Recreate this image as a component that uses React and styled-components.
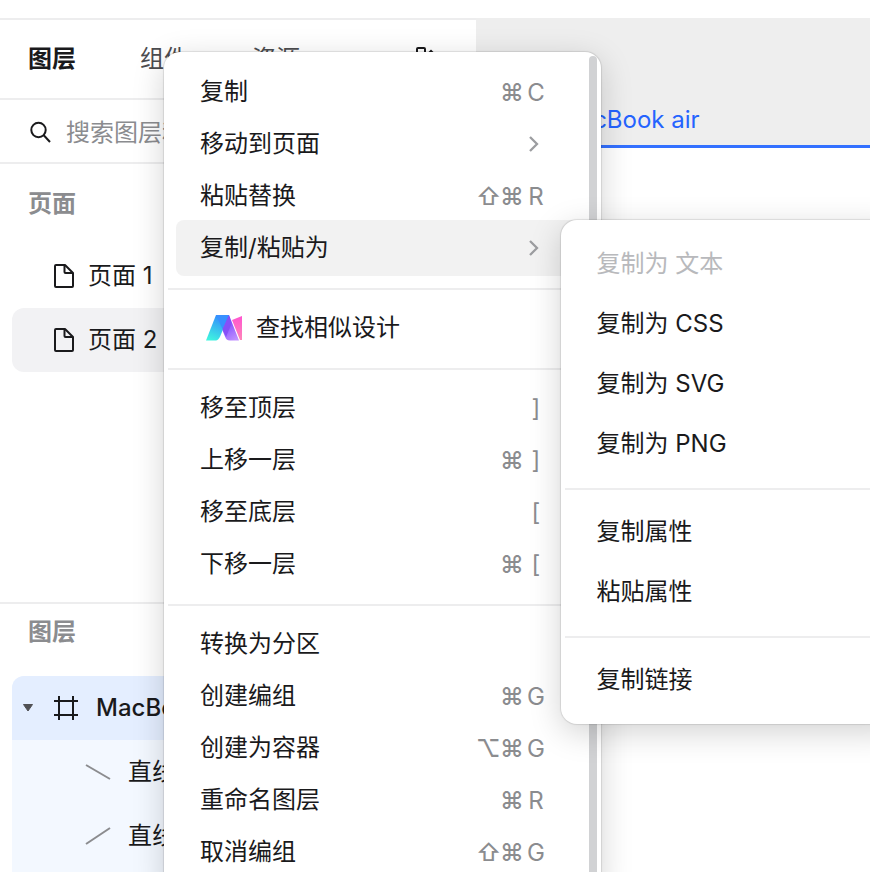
import styled, { createGlobalStyle, css } from "styled-components";

const GlobalStyle = createGlobalStyle`
  * {
    box-sizing: border-box;
  }

  body {
    margin: 0;
    overflow: hidden;
    background: #fff;
    color: #1a1a1c;
    font-family: Inter, "Noto Sans CJK SC", sans-serif;
    font-size: 24px;
    line-height: 32px;
  }
`;

const Screen = styled.div`
  position: relative;
  display: flex;
  width: 870px;
  height: 872px;
  padding-top: 18px;
  overflow: hidden;
  white-space: nowrap;
`;

const Sidebar = styled.aside`
  display: flex;
  flex-direction: column;
  flex: 0 0 476px;
  border-top: 2px solid #ededee;
`;

const TabBar = styled.nav`
  display: flex;
  align-items: center;
  height: 80px;
  padding: 0 40px 0 28px;
  border-bottom: 2px solid #ededee;
`;

const Tab = styled.span`
  width: 112px;
  color: ${({ $active }) => ($active ? "#1a1a1c" : "#4c4c4f")};
  font-weight: ${({ $active }) => ($active ? 700 : 400)};
`;

const LayoutIcon = styled.svg`
  flex: none;
  margin-left: auto;
`;

const SearchBar = styled.div`
  display: flex;
  align-items: center;
  gap: 14px;
  height: 64px;
  padding: 3px 28px 0;
  border-bottom: 2px solid #ededee;
  color: #8b8c8f;
`;

const Clipped = styled.span`
  width: ${({ $width }) => $width}px;
  overflow: hidden;
`;

const PagesSection = styled.section`
  height: 440px;
  border-bottom: 2px solid #ededee;
`;

const SectionTitle = styled.h2`
  display: flex;
  align-items: center;
  height: ${({ $height }) => $height}px;
  margin: 0;
  padding: 0 28px;
  color: #8b8c8f;
  font-size: 24px;
  font-weight: 700;
`;

const PageRow = styled.div`
  display: flex;
  align-items: center;
  gap: 12px;
  height: 64px;
  margin: 0 12px;
  padding-left: 40px;
  border-radius: 12px;
  background: ${({ $selected }) => ($selected ? "#f2f2f4" : "transparent")};
`;

const LayerList = styled.div`
  flex: 1;
  margin: 16px 12px 0;
  border-radius: 12px 12px 0 0;
  background: #f3f8ff;
  overflow: hidden;
`;

const LayerRow = styled.div`
  display: flex;
  align-items: center;
  height: 64px;
  padding-left: ${({ $child }) => ($child ? 72 : 10)}px;
  gap: ${({ $child }) => ($child ? 16 : 18)}px;
  background: ${({ $child }) => ($child ? "transparent" : "#e4eeff")};
  font-weight: ${({ $child }) => ($child ? 400 : 500)};
`;

const Canvas = styled.main`
  display: flex;
  flex-direction: column;
  flex: 1;
  background: #eee;
`;

const FrameLabel = styled.div`
  margin-top: 86px;
  padding-left: 82px;
  color: #2463ff;
`;

const Frame = styled.div`
  flex: 1;
  margin: 9px 0 0 82px;
  border-top: 3px solid #3370ff;
  background: #fff;
`;

const popup = css`
  position: absolute;
  background: #fff;
  box-shadow:
    0 0 1px 1px rgba(0, 0, 0, 0.1),
    0 8px 32px rgba(0, 0, 0, 0.18);
`;

const ContextMenu = styled.div`
  ${popup}
  top: 52px;
  left: 164px;
  display: flex;
  width: 437px;
  height: 840px;
  border-radius: 16px;
`;

const MenuBody = styled.div`
  flex: 1;
  padding-top: 14px;
`;

const ScrollThumb = styled.div`
  flex: 0 0 8px;
  margin: 4px 4px 0 0;
  border-radius: 4px;
  background: #d1d2d4;
`;

const MenuItem = styled.div`
  display: flex;
  align-items: center;
  height: 52px;
  padding: 0 40px 0 36px;

  ${({ $hover }) =>
    $hover &&
    css`
      height: 56px;
      margin: -2px 0 -2px 12px;
      padding-left: 24px;
      border-radius: 8px 0 0 8px;
      background: #f2f2f2;
    `}
`;

const Divider = styled.hr`
  height: 2px;
  margin: 14px 0 12px 4px;
  border: 0;
  background: #ededee;
`;

const Keys = styled.span`
  display: flex;
  margin-left: auto;
  padding: 2px 1px 0 0;
  color: #8b8c8f;
`;

const Key = styled.span`
  width: 24px;
  font-weight: ${({ $modifier }) => ($modifier ? 500 : 400)};
  text-align: center;
`;

const Chevron = styled.svg`
  margin: 0 9px 0 auto;
`;

const Logo = styled.svg`
  margin: 0 14px 0 6px;
`;

const SubMenu = styled.div`
  ${popup}
  top: 220px;
  left: 561px;
  width: 340px;
  height: 504px;
  padding-top: 14px;
  border-radius: 16px;
`;

const SubMenuItem = styled.div`
  display: flex;
  align-items: center;
  height: 60px;
  padding-left: 35.5px;
  color: ${({ $disabled }) => ($disabled ? "#b8b9bc" : "inherit")};
`;

const MENU_GROUPS = [
  [
    { label: "复制", keys: "⌘C" },
    { label: "移动到页面", submenu: true },
    { label: "粘贴替换", keys: "⇧⌘R" },
    { label: "复制/粘贴为", submenu: true, hover: true },
  ],
  [{ label: "查找相似设计", logo: true }],
  [
    { label: "移至顶层", keys: "]" },
    { label: "上移一层", keys: "⌘]" },
    { label: "移至底层", keys: "[" },
    { label: "下移一层", keys: "⌘[" },
  ],
  [
    { label: "转换为分区" },
    { label: "创建编组", keys: "⌘G" },
    { label: "创建为容器", keys: "⌥⌘G" },
    { label: "重命名图层", keys: "⌘R" },
    { label: "取消编组", keys: "⇧⌘G" },
  ],
];

const SUBMENU_GROUPS = [
  ["复制为 文本", "复制为 CSS", "复制为 SVG", "复制为 PNG"],
  ["复制属性", "粘贴属性"],
  ["复制链接"],
];

function PageIcon() {
  return (
    <svg width="24" height="24" viewBox="0 0 24 24" fill="none" stroke="#1a1a1c" strokeWidth="2" strokeLinejoin="round">
      <path d="M4 1h9l8 8v13a1 1 0 0 1-1 1H4a1 1 0 0 1-1-1V2a1 1 0 0 1 1-1Z" />
      <path d="M12.5 1.5V8a1 1 0 0 0 1 1H20" />
    </svg>
  );
}

function FrameIcon() {
  return (
    <svg width="26" height="24" viewBox="-2 0 26 24" fill="none" stroke="#1a1a1c" strokeWidth="2">
      <path d="M5 0v24M19 0v24M0 5h24M0 19h24" />
    </svg>
  );
}

function SimilarLogo() {
  return (
    <Logo width="36" height="26" viewBox="0 0 36 26">
      <defs>
        <linearGradient id="cyan" x1="0.6" y1="0" x2="0.2" y2="1">
          <stop offset="0" stopColor="#3289ff" />
          <stop offset="1" stopColor="#3ff5df" />
        </linearGradient>
        <linearGradient id="violet" x1="0.3" y1="0" x2="0.8" y2="1">
          <stop offset="0.15" stopColor="#7542ff" />
          <stop offset="1" stopColor="#c291ff" />
        </linearGradient>
        <linearGradient id="pink" x1="0" y1="0" x2="0" y2="1">
          <stop offset="0" stopColor="#ff54cf" />
          <stop offset="1" stopColor="#ff86b9" />
        </linearGradient>
      </defs>
      <path d="M23 0 33 25.5h-9c-3 0-4-1.5-5-4L15.5 13 21 0Z" fill="url(#violet)" />
      <path d="M10 0h13l-8.5 20.5c-1.5 3.5-2.5 5-5.5 5H0Z" fill="url(#cyan)" />
      <path d="M10 0h13l-6.5 14Z" fill="#3890ff" />
      <path d="M23 0 16.5 14l3.5 8 5-12Z" fill="#8650f8" />
      <path d="M26 5 36 1v24h-2Z" fill="url(#pink)" />
    </Logo>
  );
}

function ChevronIcon() {
  return (
    <Chevron width="12" height="18" viewBox="0 0 12 18" fill="none" stroke="#9c9da0" strokeWidth="2.3">
      <path d="m2 2 7 7-7 7" />
    </Chevron>
  );
}

function MenuRow({ item }) {
  return (
    <MenuItem $hover={item.hover}>
      {item.logo && <SimilarLogo />}
      {item.label}
      {item.submenu && <ChevronIcon />}
      {item.keys && (
        <Keys>
          {[...item.keys].map((key) => (
            <Key key={key} $modifier={"⌘⇧⌥".includes(key)}>
              {key}
            </Key>
          ))}
        </Keys>
      )}
    </MenuItem>
  );
}

export default function App() {
  return (
    <Screen>
      <GlobalStyle />
      <Sidebar>
        <TabBar>
          <Tab $active>图层</Tab>
          <Tab>组件</Tab>
          <Tab>资源</Tab>
          <LayoutIcon width="20" height="24" viewBox="0 0 20 24" fill="none" stroke="#1a1a1c" strokeWidth="2">
            <rect x="1" y="1" width="8" height="22" rx="1" />
            <path d="m12 7 3-3 3 3M15 4v16" />
          </LayoutIcon>
        </TabBar>
        <SearchBar>
          <svg width="24" height="24" viewBox="0 0 24 24" fill="none" stroke="#1a1a1c" strokeWidth="2">
            <circle cx="10.5" cy="9" r="7.2" />
            <path d="m15.5 14 6.5 7" />
          </svg>
          <Clipped $width={98}>搜索图层和页面</Clipped>
        </SearchBar>
        <PagesSection>
          <SectionTitle $height={80}>页面</SectionTitle>
          <PageRow>
            <PageIcon />
            页面 1
          </PageRow>
          <PageRow $selected>
            <PageIcon />
            页面 2
          </PageRow>
        </PagesSection>
        <SectionTitle $height={56}>图层</SectionTitle>
        <LayerList>
          <LayerRow>
            <svg width="12" height="10" viewBox="0 0 12 10">
              <path d="M1.5 1.5h9L6 8Z" fill="#505054" stroke="#505054" strokeLinejoin="round" />
            </svg>
            <FrameIcon />
            <Clipped $width={68}>MacBook air</Clipped>
          </LayerRow>
          <LayerRow $child>
            <svg width="28" height="20" viewBox="0 0 28 20" stroke="#8b8c8f" strokeWidth="2">
              <path d="m2 3 24 14" />
            </svg>
            直线
          </LayerRow>
          <LayerRow $child>
            <svg width="28" height="20" viewBox="0 0 28 20" stroke="#8b8c8f" strokeWidth="2">
              <path d="M2 18 26 2" />
            </svg>
            直线
          </LayerRow>
        </LayerList>
      </Sidebar>
      <Canvas>
        <FrameLabel>MacBook air</FrameLabel>
        <Frame />
      </Canvas>
      <ContextMenu>
        <MenuBody>
          {MENU_GROUPS.map((group, index) => (
            <div key={group[0].label}>
              {index > 0 && <Divider />}
              {group.map((item) => (
                <MenuRow key={item.label} item={item} />
              ))}
            </div>
          ))}
        </MenuBody>
        <ScrollThumb />
      </ContextMenu>
      <SubMenu>
        {SUBMENU_GROUPS.map((group, index) => (
          <div key={group[0]}>
            {index > 0 && <Divider />}
            {group.map((label) => (
              <SubMenuItem key={label} $disabled={label.endsWith("文本")}>
                {label}
              </SubMenuItem>
            ))}
          </div>
        ))}
      </SubMenu>
    </Screen>
  );
}
